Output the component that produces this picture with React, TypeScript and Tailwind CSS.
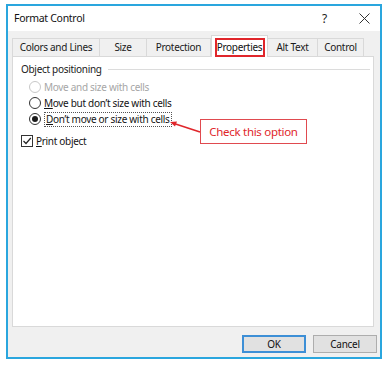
import { useState } from "react";

const TABS: { id: string; label: string; width: string }[] = [
  { id: "colors", label: "Colors and Lines", width: "w-[88px]" },
  { id: "size", label: "Size", width: "w-[47px]" },
  { id: "protection", label: "Protection", width: "w-[64px]" },
  { id: "properties", label: "Properties", width: "w-[57px]" },
  { id: "alt", label: "Alt Text", width: "w-[50px]" },
  { id: "control", label: "Control", width: "w-[46px]" },
];

function Radio({ checked, disabled }: { checked?: boolean; disabled?: boolean }) {
  return (
    <span
      className={`flex h-[12px] w-[12px] shrink-0 items-center justify-center rounded-full border bg-white ${
        disabled ? "border-[#c8c8c8]" : "border-[#333]"
      }`}
    >
      {checked ? <span className="h-[6px] w-[6px] rounded-full bg-[#1a1a1a]" /> : null}
    </span>
  );
}

export default function App() {
  const [tab, setTab] = useState("properties");
  const [position, setPosition] = useState("fixed");
  const [print, setPrint] = useState(true);

  return (
    <div className="h-[367px] w-[389px] bg-white pl-[6px] pt-[4px] font-['Noto_Sans',sans-serif] text-[10px] tracking-[-0.3px] text-[#141414]">
      <div className="flex h-[355px] w-[376px] flex-col border-2 border-[#2aa6de] bg-[#f0f0f0]">
        {/* title bar */}
        <div className="flex h-[25px] shrink-0 items-center bg-white pl-[6px] pr-[10px]">
          <span className="text-[10.5px] text-[#111]">Format Control</span>
          <span className="ml-auto mr-[32px] text-[12px] text-[#222]">?</span>
          <svg width="11" height="11" viewBox="0 0 11 11" className="text-[#333]">
            <path d="M0.5 0.5 L10.5 10.5 M10.5 0.5 L0.5 10.5" stroke="currentColor" strokeWidth="1" />
          </svg>
        </div>

        <div className="flex flex-1 flex-col pl-[4px]">
          {/* tabs */}
          <div className="mt-[4px] flex h-[21px] items-end">
            {TABS.map((t) => {
              const active = t.id === tab;
              return (
                <button
                  key={t.id}
                  type="button"
                  onClick={() => setTab(t.id)}
                  className={`relative flex shrink-0 items-center justify-center border-[#d9d9d9] ${t.width} ${
                    active
                      ? "z-10 -mb-px h-[22px] border border-b-0 bg-white pt-[2px]"
                      : "h-[18px] border-t border-r bg-[#f0f0f0] first:border-l"
                  }`}
                >
                  {active ? (
                    <span className="flex h-[19px] w-[50px] items-center justify-center border-2 border-[#e0262b] text-[#111]">
                      {t.label}
                    </span>
                  ) : (
                    <span className="text-[#1a1a1a]">{t.label}</span>
                  )}
                </button>
              );
            })}
          </div>

          {/* panel */}
          <div className="relative h-[271px] w-[362px] border border-[#d9d9d9] bg-white pl-[8px] pt-[5px]">
            <div className="flex items-center pr-[3px]">
              <span className="text-[#1a1a1a]">Object positioning</span>
              <span className="ml-[6px] h-px flex-1 bg-[#dcdcdc]" />
            </div>

            <div className="mt-[2px] flex flex-col pl-[8px]">
              <div className="flex h-[16px] items-center gap-[3px] text-[#a6a6a6]">
                <Radio disabled />
                <span>Move and size with cells</span>
              </div>
              <button
                type="button"
                onClick={() => setPosition("move")}
                className="flex h-[16px] items-center gap-[3px] text-left"
              >
                <Radio checked={position === "move"} />
                <span>
                  <u>M</u>ove but don’t size with cells
                </span>
              </button>
              <button
                type="button"
                onClick={() => setPosition("fixed")}
                className="flex h-[16px] items-center gap-[3px] text-left"
              >
                <Radio checked={position === "fixed"} />
                <span className="border border-dotted border-[#555] px-px leading-[13px]">
                  <u>D</u>on’t move or size with cells
                </span>
              </button>
            </div>

            <button
              type="button"
              onClick={() => setPrint(!print)}
              className="mt-[6px] flex h-[16px] items-center gap-[3px] text-left"
            >
              <span className="flex h-[12px] w-[12px] items-center justify-center border border-[#333] bg-white">
                {print ? (
                  <svg width="10" height="10" viewBox="0 0 10 10">
                    <path d="M1.5 5 L4 7.5 L8.8 2" fill="none" stroke="#222" strokeWidth="1.2" />
                  </svg>
                ) : null}
              </span>
              <span>
                <u>P</u>rint object
              </span>
            </button>

            {/* annotation */}
            <svg
              className="absolute left-[156px] top-[62px]"
              width="32"
              height="16"
              viewBox="0 0 32 16"
            >
              <path d="M31 13 L5 4.5" stroke="#e0262b" strokeWidth="1.6" />
              <path d="M1 3 L8 2.5 L6 7.5 Z" fill="#e0262b" />
            </svg>
            <div className="absolute left-[187px] top-[62px] flex h-[25px] w-[107px] items-center justify-center border border-[#e04a4f] bg-white text-[11.5px] text-[#e0262b]">
              Check this option
            </div>
          </div>

          {/* buttons */}
          <div className="mt-[8px] flex justify-end gap-[7px] pr-[3px]">
            <button
              type="button"
              className="flex h-[18px] w-[64px] items-center justify-center border-2 border-[#3d8fd6] bg-[#e1e1e1] text-[#111]"
            >
              OK
            </button>
            <button
              type="button"
              className="flex h-[18px] w-[64px] items-center justify-center border border-[#adadad] bg-[#e1e1e1] text-[#111]"
            >
              Cancel
            </button>
          </div>
        </div>
      </div>
    </div>
  );
}
